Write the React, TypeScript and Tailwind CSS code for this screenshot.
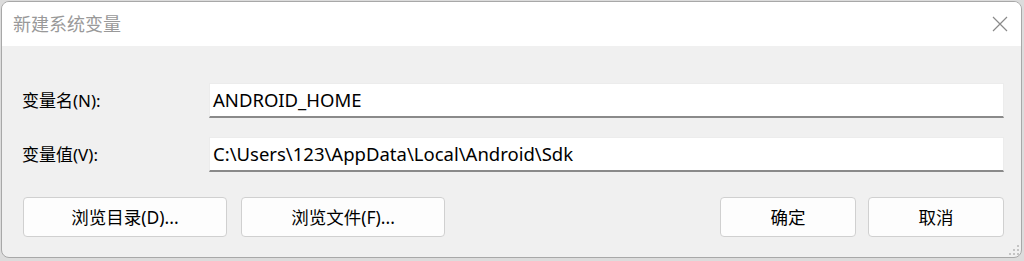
import React from "react";

const font = { fontFamily: '"Noto Sans", "Noto Sans CJK SC", sans-serif' };

function Field({ label, value }: { label: string; value: string }) {
  return (
    <div className="flex items-center h-[35px]">
      <div className="w-[207px] pl-[20px] text-[17px] text-black">{label}</div>
      <div className="flex-1 h-[35px] bg-white border border-[#ececec] border-b-2 border-b-[#8a8a8a] flex items-center pl-[3px] text-[18.5px] text-black">
        {value}
      </div>
    </div>
  );
}

function Btn({ children, w }: { children: React.ReactNode; w: string }) {
  return (
    <button className={`${w} h-[40px] bg-[#fdfdfd] border border-[#d0d0d0] rounded-[4px] text-[17.5px] text-black`}>
      {children}
    </button>
  );
}

export default function App() {
  return (
    <div className="w-[1024px] h-[261px] bg-[#dcdcdc] overflow-hidden" style={font}>
      <div className="ml-[1px] mt-[1px] w-[1021px] h-[257px] rounded-[8px] border border-[#a8a8a8] overflow-hidden flex flex-col bg-[#f0f0f0] relative">
        {/* Title bar */}
        <div className="h-[44px] bg-white flex items-center justify-between shrink-0">
          <span className="pl-[11px] text-[18px] text-[#999999]">新建系统变量</span>
          <svg className="mr-[13px] w-[16px] h-[16px]" viewBox="0 0 16 16" fill="none" stroke="#8a8a8a" strokeWidth={1.2}>
            <path d="M1 1 L15 15 M15 1 L1 15" />
          </svg>
        </div>

        {/* Fields */}
        <div className="pr-[17px] pt-[37px] flex flex-col gap-[19px]">
          <Field label="变量名(N):" value="ANDROID_HOME" />
          <Field label="变量值(V):" value="C:\Users\123\AppData\Local\Android\Sdk" />
        </div>

        {/* Buttons */}
        <div className="flex items-center pl-[21px] pr-[17px] mt-[25px]">
          <Btn w="w-[204px]">浏览目录(D)...</Btn>
          <div className="ml-[14px]">
            <Btn w="w-[204px]">浏览文件(F)...</Btn>
          </div>
          <div className="ml-auto flex gap-[12px]">
            <Btn w="w-[136px]">确定</Btn>
            <Btn w="w-[136px]">取消</Btn>
          </div>
        </div>

        {/* resize grip */}
        <svg className="absolute right-[2px] bottom-[2px] w-[10px] h-[10px]" viewBox="0 0 10 10" fill="#c4c4c4">
          <rect x="8" y="0" width="2" height="2" />
          <rect x="4" y="4" width="2" height="2" />
          <rect x="8" y="4" width="2" height="2" />
          <rect x="0" y="8" width="2" height="2" />
          <rect x="4" y="8" width="2" height="2" />
          <rect x="8" y="8" width="2" height="2" />
        </svg>
      </div>
    </div>
  );
}
